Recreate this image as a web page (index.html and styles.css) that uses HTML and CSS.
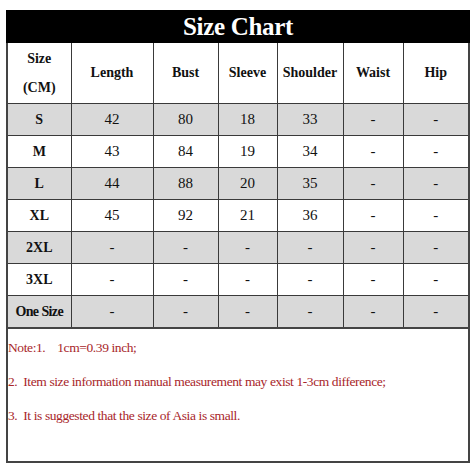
FILE: index.html
```html
<!DOCTYPE html>
<html>
<head>
<meta charset="utf-8">
<link rel="stylesheet" href="styles.css">
</head>
<body>
<div class="page">
<table class="chart">
  <colgroup>
    <col class="c1"><col class="c2"><col class="c3"><col class="c4"><col class="c5"><col class="c6"><col class="c7">
  </colgroup>
  <tr class="title"><th colspan="7">Size Chart</th></tr>
  <tr class="head">
    <th class="twoline">Size<br>(CM)</th><th>Length</th><th>Bust</th><th>Sleeve</th><th>Shoulder</th><th>Waist</th><th>Hip</th>
  </tr>
  <tr class="gray"><th>S</th><td>42</td><td>80</td><td>18</td><td>33</td><td>-</td><td>-</td></tr>
  <tr><th>M</th><td>43</td><td>84</td><td>19</td><td>34</td><td>-</td><td>-</td></tr>
  <tr class="gray"><th>L</th><td>44</td><td>88</td><td>20</td><td>35</td><td>-</td><td>-</td></tr>
  <tr><th>XL</th><td>45</td><td>92</td><td>21</td><td>36</td><td>-</td><td>-</td></tr>
  <tr class="gray"><th>2XL</th><td>-</td><td>-</td><td>-</td><td>-</td><td>-</td><td>-</td></tr>
  <tr><th>3XL</th><td>-</td><td>-</td><td>-</td><td>-</td><td>-</td><td>-</td></tr>
  <tr class="gray"><th class="onesize">One Size</th><td>-</td><td>-</td><td>-</td><td>-</td><td>-</td><td>-</td></tr>
  <tr class="notes">
    <td colspan="7">
      <div class="note">Note:1.    1cm=0.39 inch;</div>
      <div class="note">2.  Item size information manual measurement may exist 1-3cm difference;</div>
      <div class="note">3.  It is suggested that the size of Asia is small.</div>
    </td>
  </tr>
</table>
</div>
</body>
</html>
```
FILE: styles.css
```css
html, body {
  margin: 0;
  padding: 0;
  background: #ffffff;
}
.page {
  padding: 10px 0 0 6px;
}
.chart {
  border-collapse: collapse;
  table-layout: fixed;
  width: 462px;
  font-family: "Liberation Serif", "Times New Roman", serif;
  color: #111;
  border: 2px solid #444;
}
.c1 { width: 64px; }
.c2 { width: 82px; }
.c3 { width: 65px; }
.c4 { width: 59px; }
.c5 { width: 66px; }
.c6 { width: 60px; }
.c7 { width: 66px; }
.chart th, .chart td {
  border: 1px solid #3a3a3a;
  padding: 0;
  text-align: center;
  vertical-align: middle;
  height: 31px;
  font-size: 15px;
}
.chart th {
  font-weight: bold;
  font-size: 14px;
}
.title th {
  background: #000;
  color: #fff;
  font-size: 25px;
  height: 29px;
  border: 2px solid #000;
  letter-spacing: -0.3px;
}
.head th {
  height: 60px;
  border-top: 2px solid #333;
}
.twoline {
  line-height: 29px;
}
.onesize {
  letter-spacing: -0.6px;
  font-size: 14px;
}
.gray th, .gray td {
  background: #d9d9d9;
}
.notes td {
  height: 130px;
  text-align: left;
  vertical-align: top;
  padding: 2px 0 0 0;
  border-top: 2px solid #444;
}
.note {
  color: #a8262a;
  font-size: 13.5px;
  line-height: 34px;
  white-space: pre;
  letter-spacing: -0.4px;
}
```
